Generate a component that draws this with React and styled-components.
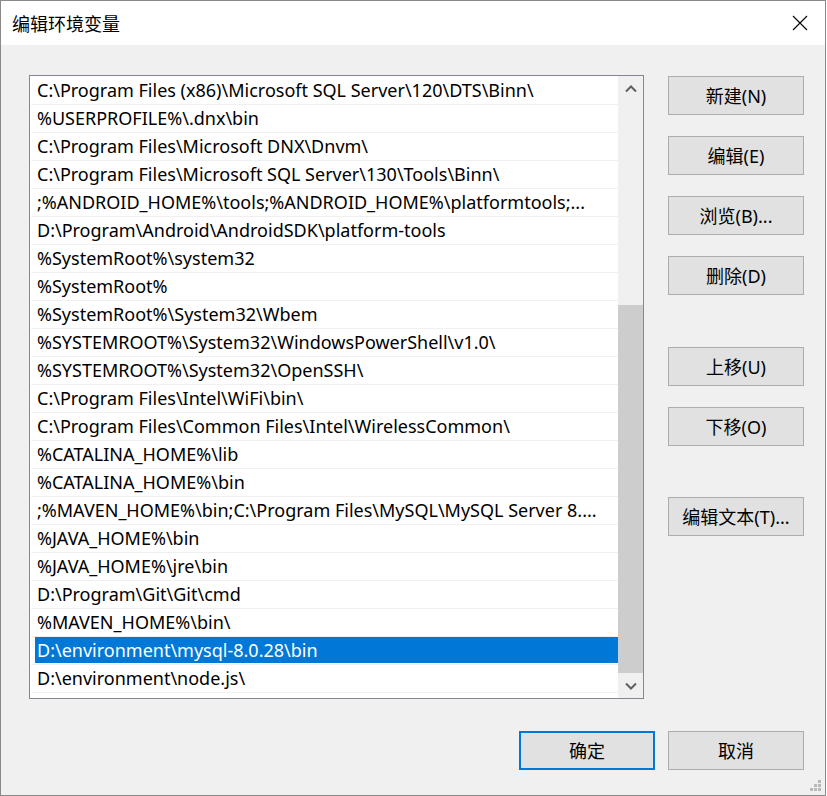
import React from "react";
import styled, { createGlobalStyle } from "styled-components";

const GlobalStyle = createGlobalStyle`
  body {
    margin: 0;
    background: #ffffff;
    font-family: "Noto Sans", "Noto Sans CJK SC", sans-serif;
  }
`;

const paths = [
  "C:\\Program Files (x86)\\Microsoft SQL Server\\120\\DTS\\Binn\\",
  "%USERPROFILE%\\.dnx\\bin",
  "C:\\Program Files\\Microsoft DNX\\Dnvm\\",
  "C:\\Program Files\\Microsoft SQL Server\\130\\Tools\\Binn\\",
  ";%ANDROID_HOME%\\tools;%ANDROID_HOME%\\platformtools;...",
  "D:\\Program\\Android\\AndroidSDK\\platform-tools",
  "%SystemRoot%\\system32",
  "%SystemRoot%",
  "%SystemRoot%\\System32\\Wbem",
  "%SYSTEMROOT%\\System32\\WindowsPowerShell\\v1.0\\",
  "%SYSTEMROOT%\\System32\\OpenSSH\\",
  "C:\\Program Files\\Intel\\WiFi\\bin\\",
  "C:\\Program Files\\Common Files\\Intel\\WirelessCommon\\",
  "%CATALINA_HOME%\\lib",
  "%CATALINA_HOME%\\bin",
  ";%MAVEN_HOME%\\bin;C:\\Program Files\\MySQL\\MySQL Server 8....",
  "%JAVA_HOME%\\bin",
  "%JAVA_HOME%\\jre\\bin",
  "D:\\Program\\Git\\Git\\cmd",
  "%MAVEN_HOME%\\bin\\",
  "D:\\environment\\mysql-8.0.28\\bin",
  "D:\\environment\\node.js\\",
];

const SELECTED = 20;

const Window = styled.div`
  position: relative;
  width: 826px;
  height: 796px;
  box-sizing: border-box;
  border: 1px solid #8a8a8a;
  background: #f0f0f0;
  display: flex;
  flex-direction: column;
`;

const TitleBar = styled.div`
  height: 44px;
  flex-shrink: 0;
  background: #ffffff;
  display: flex;
  align-items: center;
  justify-content: space-between;
  padding-left: 11px;
`;

const Title = styled.div`
  font-size: 18px;
  color: #000;
`;

const CloseButton = styled.div`
  width: 46px;
  height: 44px;
  margin-right: 2px;
  display: flex;
  align-items: center;
  justify-content: center;
`;

const Body = styled.div`
  flex: 1;
  display: flex;
  flex-direction: column;
  padding: 30px 21px 25px 28px;
`;

const Main = styled.div`
  display: flex;
  gap: 24px;
`;

const ListBox = styled.div`
  width: 615px;
  height: 624px;
  box-sizing: border-box;
  border: 1px solid #828790;
  background: #ffffff;
  display: flex;
`;

const Rows = styled.div`
  flex: 1;
  padding: 1px 0 0 1px;
  overflow: hidden;
`;

const Row = styled.div`
  height: 27px;
  border-bottom: 1px solid #f0f0f0;
  padding-left: 4px;
  display: flex;
`;

const RowText = styled.div`
  flex: 1;
  height: 26px;
  line-height: 27px;
  padding-left: 2px;
  font-size: 18px;
  white-space: nowrap;
  overflow: hidden;
  color: ${(p) => (p.$selected ? "#ffffff" : "#000000")};
  background: ${(p) => (p.$selected ? "#0078d7" : "transparent")};
`;

const Scrollbar = styled.div`
  width: 25px;
  background: #f0f0f0;
  display: flex;
  flex-direction: column;
`;

const ArrowButton = styled.div`
  height: 25px;
  display: flex;
  align-items: center;
  justify-content: center;
`;

const Track = styled.div`
  flex: 1;
  display: flex;
  flex-direction: column;
  justify-content: flex-end;
`;

const Thumb = styled.div`
  height: 368px;
  background: #cdcdcd;
`;

const Side = styled.div`
  display: flex;
  flex-direction: column;
  padding-top: 1px;
`;

const Button = styled.button`
  width: 136px;
  height: 39px;
  box-sizing: border-box;
  margin: 0;
  margin-top: ${(p) => p.$gap || 0}px;
  padding: 0 0 2px;
  border: ${(p) => (p.$primary ? "2px solid #0078d7" : "1px solid #adadad")};
  background: #e1e1e1;
  font-family: "Noto Sans", "Noto Sans CJK SC", sans-serif;
  font-size: 18px;
  color: #000;
`;

const Footer = styled.div`
  margin-top: auto;
  display: flex;
  justify-content: flex-end;
  gap: 13px;
`;

const Grip = styled.svg`
  position: absolute;
  right: 3px;
  bottom: 3px;
`;

const Chevron = ({ down }) => (
  <svg width="12" height="8" viewBox="0 0 12 8">
    <path
      d={down ? "M1 1.5 L6 6.5 L11 1.5" : "M1 6.5 L6 1.5 L11 6.5"}
      fill="none"
      stroke="#606060"
      strokeWidth="2"
    />
  </svg>
);

export default function App() {
  return (
    <>
      <GlobalStyle />
      <Window>
        <TitleBar>
          <Title>编辑环境变量</Title>
          <CloseButton>
            <svg width="16" height="16" viewBox="0 0 16 16">
              <path d="M1 1 L15 15 M15 1 L1 15" stroke="#000" strokeWidth="1.1" />
            </svg>
          </CloseButton>
        </TitleBar>
        <Body>
          <Main>
            <ListBox>
              <Rows>
                {paths.map((p, i) => (
                  <Row key={i}>
                    <RowText $selected={i === SELECTED}>{p}</RowText>
                  </Row>
                ))}
              </Rows>
              <Scrollbar>
                <ArrowButton>
                  <Chevron />
                </ArrowButton>
                <Track>
                  <Thumb />
                </Track>
                <ArrowButton>
                  <Chevron down />
                </ArrowButton>
              </Scrollbar>
            </ListBox>
            <Side>
              <Button>新建(N)</Button>
              <Button $gap={21}>编辑(E)</Button>
              <Button $gap={21}>浏览(B)...</Button>
              <Button $gap={21}>删除(D)</Button>
              <Button $gap={52}>上移(U)</Button>
              <Button $gap={21}>下移(O)</Button>
              <Button $gap={51}>编辑文本(T)...</Button>
            </Side>
          </Main>
          <Footer>
            <Button $primary>确定</Button>
            <Button>取消</Button>
          </Footer>
        </Body>
        <Grip width="12" height="12" viewBox="0 0 12 12">
          <g fill="#b8b8b8">
            <rect x="8" y="0" width="3" height="3" />
            <rect x="4" y="4" width="3" height="3" />
            <rect x="8" y="4" width="3" height="3" />
            <rect x="0" y="8" width="3" height="3" />
            <rect x="4" y="8" width="3" height="3" />
            <rect x="8" y="8" width="3" height="3" />
          </g>
        </Grip>
      </Window>
    </>
  );
}
